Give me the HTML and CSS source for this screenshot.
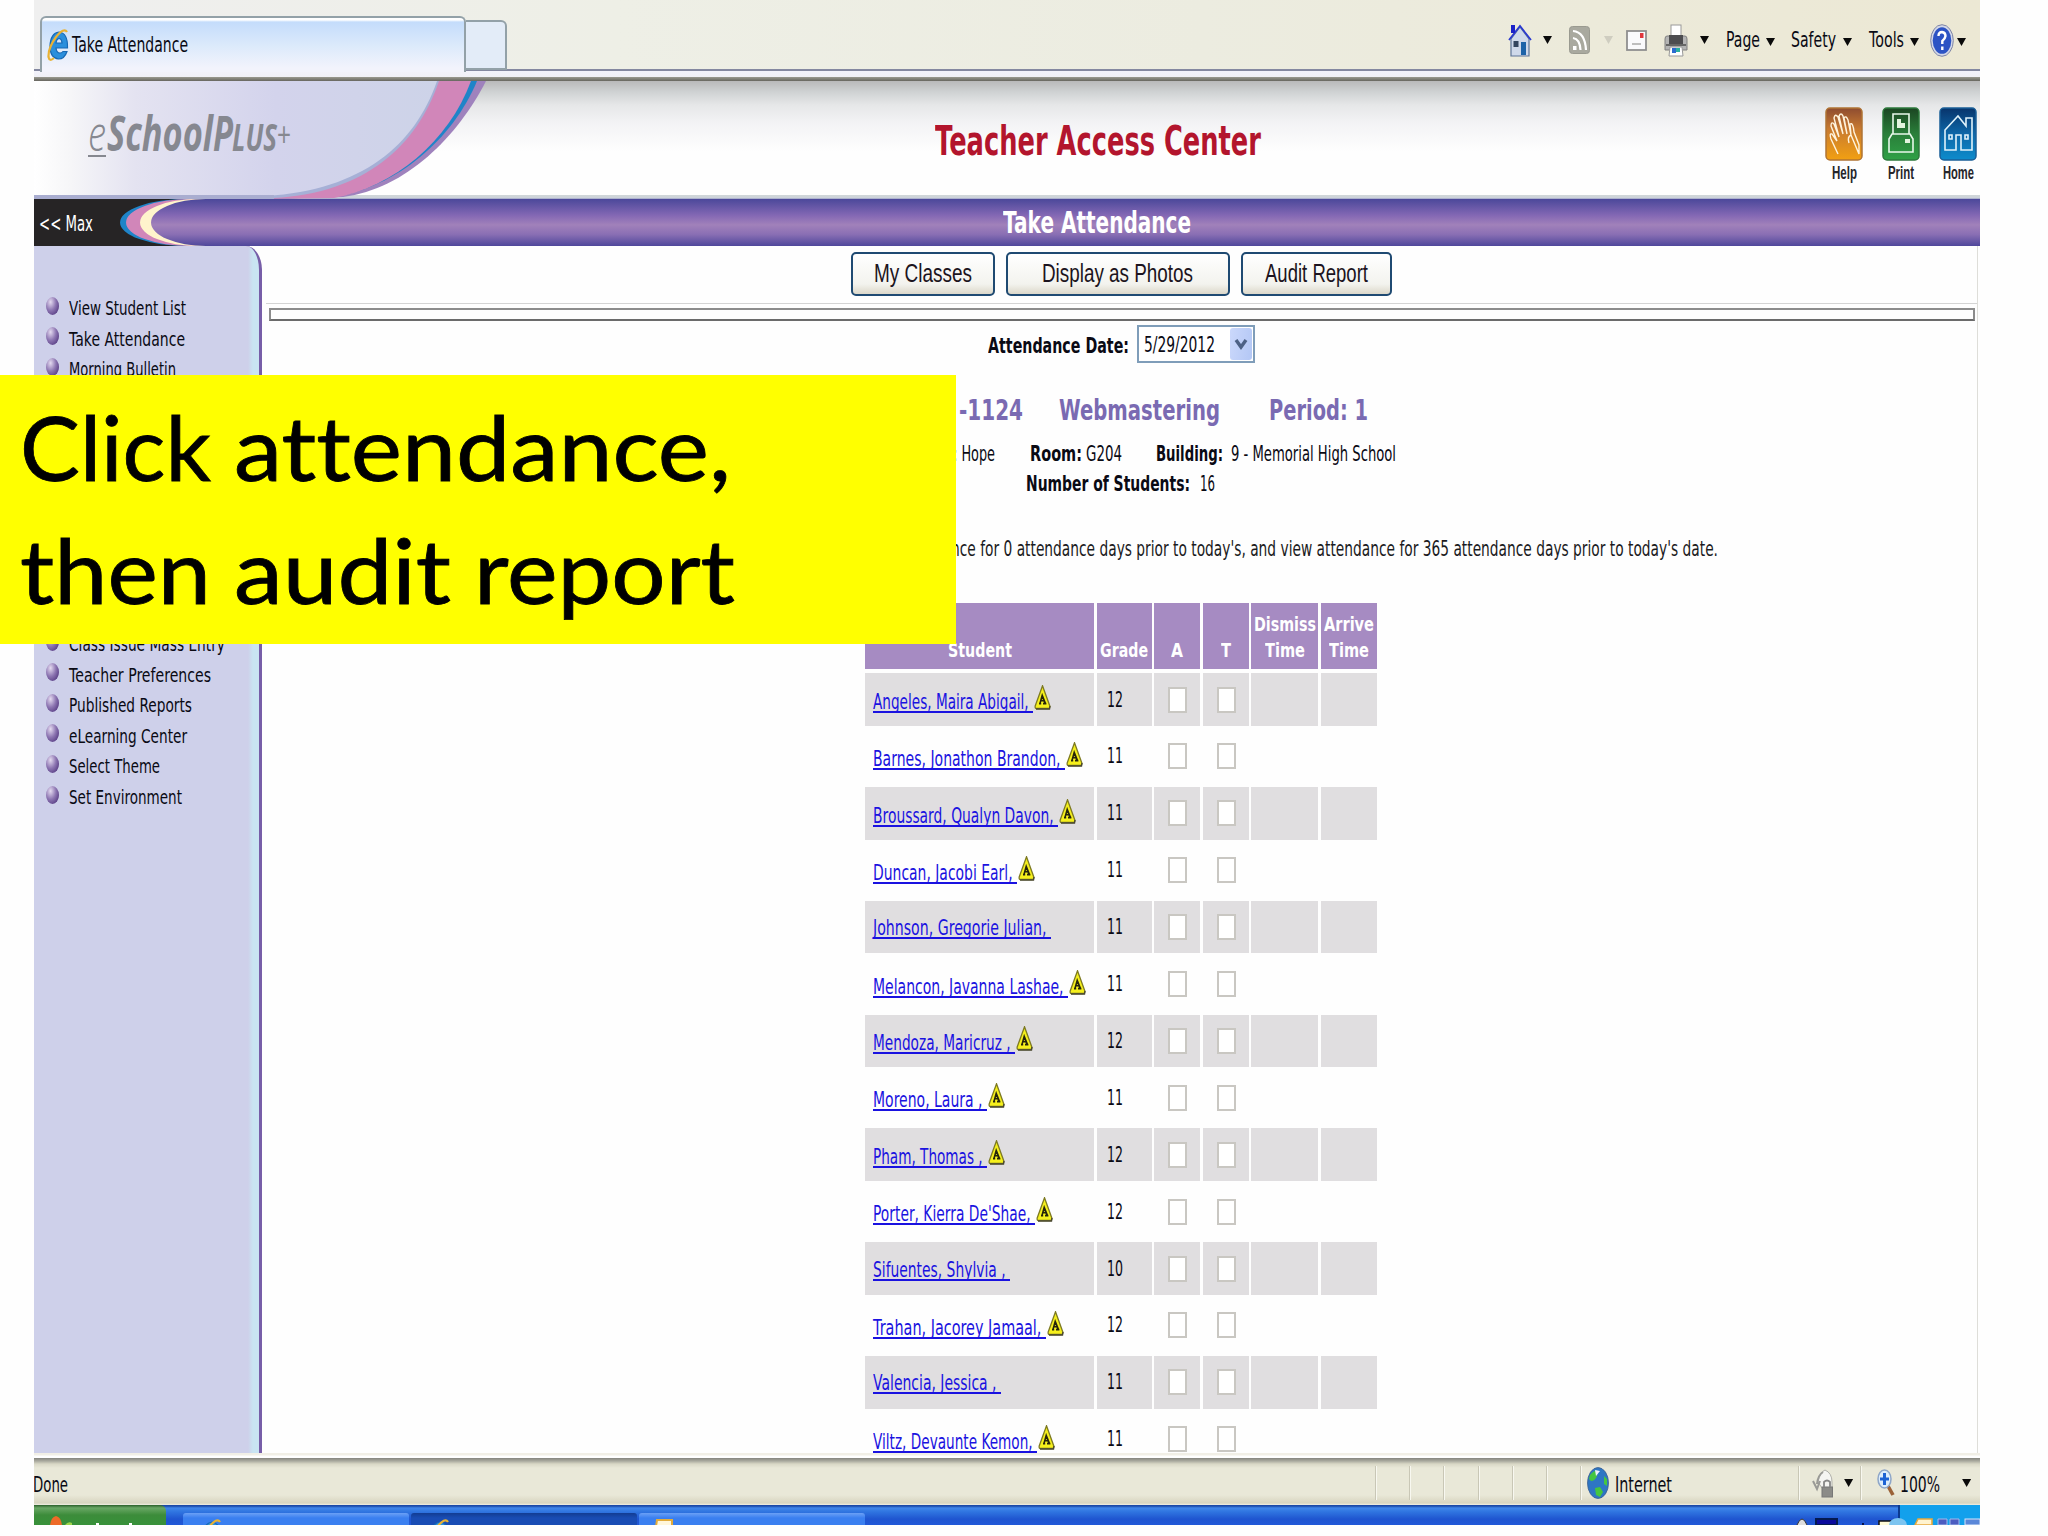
FILE: index.html
```html
<!DOCTYPE html>
<html lang="en">
<head>
<meta charset="utf-8">
<title>Take Attendance</title>
<link rel="stylesheet" href="styles.css">
</head>
<body>
<svg class="defs" width="0" height="0" aria-hidden="true">
  <defs>
    <symbol id="warn" viewBox="0 0 17 25">
      <path d="M8.500 .8 L15.800 21 Q16 23.500 14 23.500 H2.500 Q.8 23.500 1.200 21 Z" fill="#f6f01c" stroke="#7d7a22" stroke-width="1.300"/>
      <path d="M2 24 H15.500 L16 21" fill="none" stroke="#4a4830" stroke-width="1.400"/>
      <path d="M5 18.600 H7.200 M9 18.600 H12.400 M6 18.400 L8.200 10.500 L11 18.400 M8.500 11 L11.300 18 M7 15.800 H9.600" fill="none" stroke="#26240a" stroke-width="1.600"/>
    </symbol>
    <symbol id="ie" viewBox="0 0 22 34">
      <path d="M19 20 H9 Q9.500 25 13 25 Q15 25 16 23.500 H20 Q17.500 31 11.500 31 Q3 30 3 18 Q3.500 5 12 4 Q21 5 20.500 20 Z M9 15 H15 Q14.500 10.500 12 10.500 Q9.500 11 9 15 Z" fill="#2a8fdc" fill-rule="evenodd" stroke="#1668b4" stroke-width="1.200"/>
      <path d="M20 4 Q17 -1 9 9 Q1 20 1.500 29 Q2.500 34 7 30" fill="none" stroke="#e9b233" stroke-width="2.200"/>
    </symbol>
  </defs>
</svg>

<div class="window">
  <div class="tabbar">
    <div class="tab">
      <svg width="22" height="34"><use href="#ie"/></svg>
      <span class="fit" data-w="116">Take Attendance</span>
    </div>
    <div class="newtab"></div>
    <div class="tools">
      <svg class="t-home" width="24" height="33" viewBox="0 0 24 33">
        <path d="M3 15 V32 H21 V15 L12 3 Z" fill="#cfd9ea" stroke="#5e7598" stroke-width="1.200"/>
        <path d="M1 16 L12 2 L23 16" fill="none" stroke="#2a39d0" stroke-width="1.800"/>
        <rect x="3" y="1" width="4" height="8" fill="#1c22c8"/>
        <rect x="5.500" y="17" width="5" height="6" fill="#34465f"/><rect x="13" y="18" width="5" height="13" fill="#1d63a8"/>
      </svg>
      <i class="arr a1"></i>
      <svg class="t-rss" width="21" height="28" viewBox="0 0 21 28">
        <rect x=".5" y=".5" width="20" height="27" rx="3" fill="#a9a99f" stroke="#9a9a90"/>
        <rect x="4" y="20" width="3.500" height="4" fill="#fff"/>
        <path d="M4 12 Q11 13 11.500 24 M4 5 Q16 6 17 24" fill="none" stroke="#fff" stroke-width="2.200"/>
      </svg>
      <i class="arr a2"></i>
      <svg class="t-mail" width="21" height="21" viewBox="0 0 21 21">
        <rect x="1" y="1" width="19" height="19" fill="#fafafc" stroke="#8f8f8f" stroke-width="1.800"/>
        <rect x="14" y="3" width="3.500" height="5" fill="#e0363c"/><path d="M6 14 H15" stroke="#aaa" stroke-width="1.500"/>
      </svg>
      <svg class="t-print" width="24" height="33" viewBox="0 0 24 33">
        <rect x="7" y="1" width="10" height="12" fill="#fff" stroke="#999"/>
        <path d="M1 15 Q1 12 3 12 H21 Q23 12 23 15 V26 H1 Z" fill="#b4b4b4" stroke="#808080"/>
        <rect x="5" y="11" width="14" height="9" fill="#4d4d50"/><path d="M2 21 H22" stroke="#666" stroke-width="2"/>
        <path d="M6 23 H18 L19 32 H5 Z" fill="#fff" stroke="#999"/><rect x="8" y="24" width="4" height="5" fill="#2b6bd0"/><rect x="12" y="24" width="4" height="4" fill="#2bb0a0"/>
      </svg>
      <i class="arr a3"></i>
      <span class="fit" data-w="34">Page</span><i class="arr a4"></i>
      <span class="fit" data-w="45">Safety</span><i class="arr a5"></i>
      <span class="fit" data-w="35">Tools</span><i class="arr a6"></i>
      <svg class="t-help" width="24" height="33" viewBox="0 0 24 33">
        <ellipse cx="12" cy="16.500" rx="11.300" ry="15.800" fill="#d4d8e8" stroke="#7d84a4"/>
        <ellipse cx="12" cy="16.500" rx="9.300" ry="13.300" fill="#2c53c4"/>
        <path d="M8.500 12 Q8.500 8 12 8 Q15.500 8.500 15.500 12 Q15 15 12.300 17 V20 M12.300 22.500 V26" fill="none" stroke="#fff" stroke-width="2.400"/>
      </svg>
      <i class="arr a7"></i>
    </div>
  </div>

  <div class="header">
    <svg class="swoosh" width="452" height="118" viewBox="0 0 452 118">
      <defs><linearGradient id="lg"><stop offset="0" stop-color="#fff"/><stop offset=".09" stop-color="#f6f6f8"/><stop offset=".25" stop-color="#e4e3f1"/><stop offset=".6" stop-color="#d3d3ec"/><stop offset="1" stop-color="#cdd3e8"/></linearGradient></defs>
      <path d="M452 0 C424 55 372 108 309 116 L230 118 L404 0 Z" fill="#9f82bd"/>
      <path d="M443 0 C419 58 363 106 300 116 L230 118 L404 0 Z" fill="#1f84c8"/>
      <path d="M437 0 C415 60 360 106 300 117 L230 118 L400 0 Z" fill="#d186b9"/>
      <path d="M0 0 H405 C383 65 331 112 240 117 H0 Z" fill="#a6b0d6"/>
      <path d="M0 0 H403 C381 64 328 109 232 115 H0 Z" fill="url(#lg)"/>
      <path d="M0 114 H240 V118 H0 Z" fill="#a9add0"/>
    </svg>
    <div class="logo">
      <span class="logo-e"><span class="fit" data-w="18">e</span></span>
      <span class="logo-b fit" data-w="106">School</span>
      <span class="logo-b fit" data-w="20">P</span>
      <span class="logo-s fit" data-w="45">LUS</span>
      <span class="logo-p fit" data-w="14">+</span>
    </div>
    <div class="apptitle"><span class="fit" data-w="326">Teacher Access Center</span></div>
    <div class="actions">
      <div class="action">
        <svg width="38" height="54" viewBox="0 0 38 54">
          <defs><linearGradient id="g1" x2="0" y2="1"><stop offset="0" stop-color="#8e4c30"/><stop offset=".4" stop-color="#c87a30"/><stop offset="1" stop-color="#f2a012"/></linearGradient></defs>
          <rect x="1" y="1" width="36" height="52" rx="4" fill="url(#g1)" stroke="#b07434" stroke-width="1.500"/>
          <path d="M13 47 L6 32 Q4 26 7 27 L12 34 L6 19 Q6 14 9 17 L14 30 L9 11 Q10 6 13 10 L18 27 L14 9 Q16 5 18 9 L22 27 L19 11 Q21 8 23 13 L26 28 Q22 30 24 36 M26 28 L25 17 Q28 15 29 25 L34 38 L34 47 Z" fill="none" stroke="#fff3dc" stroke-width="1.400"/>
        </svg>
        <span class="fit" data-w="25">Help</span>
      </div>
      <div class="action">
        <svg width="38" height="54" viewBox="0 0 38 54">
          <defs><linearGradient id="g2" x2="0" y2="1"><stop offset="0" stop-color="#1b4522"/><stop offset=".5" stop-color="#2a7f3a"/><stop offset="1" stop-color="#2fa146"/></linearGradient></defs>
          <rect x="1" y="1" width="36" height="52" rx="4" fill="url(#g2)" stroke="#2d7a3c" stroke-width="1.500"/>
          <path d="M11 27 V7 H27 V27 M7 45 V32 L10 27 H28 L31 32 V45 Z" fill="none" stroke="#e8f8ea" stroke-width="1.600"/>
          <path d="M15 12 H19 V16 H23 V21 H15 Z M23 32 H28 V36 H23 Z" fill="#e3f4df"/>
        </svg>
        <span class="fit" data-w="26">Print</span>
      </div>
      <div class="action">
        <svg width="38" height="54" viewBox="0 0 38 54">
          <defs><linearGradient id="g3" x2="0" y2="1"><stop offset="0" stop-color="#08346c"/><stop offset=".5" stop-color="#0d67a8"/><stop offset="1" stop-color="#0d8ccc"/></linearGradient></defs>
          <rect x="1" y="1" width="36" height="52" rx="4" fill="url(#g3)" stroke="#1a5f98" stroke-width="1.500"/>
          <path d="M6 43 V23 L19 9 L27 19 V11 H33 V43 H22 V28 H17 V43 Z M10 28 H13 V32 H10 Z M26 28 H29 V32 H26 Z" fill="none" stroke="#dff2fb" stroke-width="1.600"/>
        </svg>
        <span class="fit" data-w="31">Home</span>
      </div>
    </div>
  </div>

  <div class="titlebar">
    <svg class="crescent" width="180" height="47" viewBox="0 0 180 47" preserveAspectRatio="none">
      <defs><linearGradient id="pb" x2="0" y2="1"><stop offset="0" stop-color="#4b489a"/><stop offset=".35" stop-color="#8468b4"/><stop offset=".55" stop-color="#a181ba"/><stop offset=".75" stop-color="#8a6fb4"/><stop offset="1" stop-color="#4f479b"/></linearGradient></defs>
      <rect width="180" height="47" fill="#262425"/>
      <path d="M180 0 H152 A66 23.500 0 0 0 152 47 H180 Z" fill="#1f84c8"/>
      <path d="M180 0 H156 A64 23.500 0 0 0 156 47 H180 Z" fill="#d186b9"/>
      <path d="M180 0 H164 A58 23.500 0 0 0 164 47 H180 Z" fill="#fff4cc"/>
      <path d="M180 0 H172 A55 23.500 0 0 0 172 47 H180 Z" fill="url(#pb)"/>
    </svg>
    <span class="max fit" data-w="54">&lt;&lt; Max</span>
    <span class="ptitle fit" data-w="188">Take Attendance</span>
  </div>

  <div class="body">
    <div class="sidebar">
      <ul class="nav">
        <li><i></i><span class="fit" data-w="117">View Student List</span></li>
        <li><i></i><span class="fit" data-w="116">Take Attendance</span></li>
        <li><i></i><span class="fit" data-w="107">Morning Bulletin</span></li>
      </ul>
      <ul class="nav nav-lower">
        <li><i></i><span class="fit" data-w="156">Class Issue Mass Entry</span></li>
        <li><i></i><span class="fit" data-w="142">Teacher Preferences</span></li>
        <li><i></i><span class="fit" data-w="123">Published Reports</span></li>
        <li><i></i><span class="fit" data-w="118">eLearning Center</span></li>
        <li><i></i><span class="fit" data-w="91">Select Theme</span></li>
        <li><i></i><span class="fit" data-w="113">Set Environment</span></li>
      </ul>
    </div>
    <div class="main">
      <div class="buttons">
        <button class="b1"><span class="fit" data-w="98">My Classes</span></button>
        <button class="b2"><span class="fit" data-w="151">Display as Photos</span></button>
        <button class="b3"><span class="fit" data-w="103">Audit Report</span></button>
      </div>
      <div class="rule"></div>
      <div class="date">
        <b class="fit" data-w="141">Attendance Date:</b>
        <div class="select"><span class="fit" data-w="71">5/29/2012</span>
          <div class="drop"><svg width="14" height="12" viewBox="0 0 14 12"><path d="M2 2 L7 9 L12 2" fill="none" stroke="#4d6185" stroke-width="3.400"/></svg></div>
        </div>
      </div>
      <div class="course">
        <span class="fit" data-w="64">-1124</span>
        <span class="fit" data-w="161">Webmastering</span>
        <span class="fit" data-w="99">Period: 1</span>
      </div>
      <div class="info">
        <span class="fit" data-w="42">: Hope</span>
        <b class="fit room" data-w="52">Room:</b><span class="fit room-no" data-w="36">G204</span>
        <b class="fit bldg" data-w="67">Building:</b><span class="fit bldg-name" data-w="165">9 - Memorial High School</span>
      </div>
      <div class="count"><b class="fit" data-w="164">Number of Students:</b><span class="fit" data-w="15">16</span></div>
      <div class="note"><span class="fit" data-w="767">nce for 0 attendance days prior to today's, and view attendance for 365 attendance days prior to today's date.</span></div>

      <div class="grid">
        <div class="row head">
          <div><span class="fit" data-w="64">Student</span></div>
          <div><span class="fit" data-w="48">Grade</span></div>
          <div><span class="fit" data-w="12">A</span></div>
          <div><span class="fit" data-w="10">T</span></div>
          <div><span class="fit" data-w="62">Dismiss</span><span class="fit" data-w="40">Time</span></div>
          <div><span class="fit" data-w="50">Arrive</span><span class="fit" data-w="40">Time</span></div>
        </div>
        <div class="row"><div><a class="fit" data-w="160">Angeles, Maira Abigail,&nbsp;</a><svg><use href="#warn"/></svg></div><div><span class="fit" data-w="16">12</span></div><div><i></i></div><div><i></i></div><div></div><div></div></div>
        <div class="row"><div><a class="fit" data-w="192">Barnes, Jonathon Brandon,&nbsp;</a><svg><use href="#warn"/></svg></div><div><span class="fit" data-w="16">11</span></div><div><i></i></div><div><i></i></div><div></div><div></div></div>
        <div class="row"><div><a class="fit" data-w="185">Broussard, Qualyn Davon,&nbsp;</a><svg><use href="#warn"/></svg></div><div><span class="fit" data-w="16">11</span></div><div><i></i></div><div><i></i></div><div></div><div></div></div>
        <div class="row"><div><a class="fit" data-w="144">Duncan, Jacobi Earl,&nbsp;</a><svg><use href="#warn"/></svg></div><div><span class="fit" data-w="16">11</span></div><div><i></i></div><div><i></i></div><div></div><div></div></div>
        <div class="row plain"><div><a class="fit" data-w="178">Johnson, Gregorie Julian,&nbsp;</a></div><div><span class="fit" data-w="16">11</span></div><div><i></i></div><div><i></i></div><div></div><div></div></div>
        <div class="row"><div><a class="fit" data-w="195">Melancon, Javanna Lashae,&nbsp;</a><svg><use href="#warn"/></svg></div><div><span class="fit" data-w="16">11</span></div><div><i></i></div><div><i></i></div><div></div><div></div></div>
        <div class="row"><div><a class="fit" data-w="142">Mendoza, Maricruz ,&nbsp;</a><svg><use href="#warn"/></svg></div><div><span class="fit" data-w="16">12</span></div><div><i></i></div><div><i></i></div><div></div><div></div></div>
        <div class="row"><div><a class="fit" data-w="114">Moreno, Laura ,&nbsp;</a><svg><use href="#warn"/></svg></div><div><span class="fit" data-w="16">11</span></div><div><i></i></div><div><i></i></div><div></div><div></div></div>
        <div class="row"><div><a class="fit" data-w="114">Pham, Thomas ,&nbsp;</a><svg><use href="#warn"/></svg></div><div><span class="fit" data-w="16">12</span></div><div><i></i></div><div><i></i></div><div></div><div></div></div>
        <div class="row"><div><a class="fit" data-w="162">Porter, Kierra De'Shae,&nbsp;</a><svg><use href="#warn"/></svg></div><div><span class="fit" data-w="16">12</span></div><div><i></i></div><div><i></i></div><div></div><div></div></div>
        <div class="row plain"><div><a class="fit" data-w="137">Sifuentes, Shylvia ,&nbsp;</a></div><div><span class="fit" data-w="16">10</span></div><div><i></i></div><div><i></i></div><div></div><div></div></div>
        <div class="row"><div><a class="fit" data-w="173">Trahan, Jacorey Jamaal,&nbsp;</a><svg><use href="#warn"/></svg></div><div><span class="fit" data-w="16">12</span></div><div><i></i></div><div><i></i></div><div></div><div></div></div>
        <div class="row plain"><div><a class="fit" data-w="128">Valencia, Jessica ,&nbsp;</a></div><div><span class="fit" data-w="16">11</span></div><div><i></i></div><div><i></i></div><div></div><div></div></div>
        <div class="row"><div><a class="fit" data-w="164">Viltz, Devaunte Kemon,&nbsp;</a><svg><use href="#warn"/></svg></div><div><span class="fit" data-w="16">11</span></div><div><i></i></div><div><i></i></div><div></div><div></div></div>
      </div>
    </div>
  </div>

  <div class="status">
    <div class="done"><span class="fit" data-w="35">Done</span></div>
    <div class="seg"></div><div class="seg"></div><div class="seg"></div><div class="seg"></div><div class="seg"></div><div class="seg"></div>
    <div class="zone">
      <svg width="22" height="32" viewBox="0 0 22 32">
        <ellipse cx="11" cy="16" rx="10.500" ry="15.500" fill="#2e76c4" stroke="#3c5f90" stroke-width=".8"/>
        <path d="M3 8 Q8 2 11 4 L10 9 Q8 14 4 14 L2 12 Z M8 21 L13 20 L16 25 L13 30 L9 28 Z M17 9 L20 12 L20 19 L17 17 Z" fill="#45c640"/>
        <path d="M8 3 L13 4 L9 9 Z" fill="#eef"/>
      </svg>
      <span class="fit" data-w="57">Internet</span>
    </div>
    <div class="lock">
      <svg width="22" height="30" viewBox="0 0 22 30">
        <path d="M6 14 Q8 4 13 2 Q20 5 20 14 V20 H10 Z" fill="#f5f5f2" stroke="#b0b0aa"/>
        <path d="M1 13 L5 21 L8 13 M5 16 Q6 7 11 4" fill="none" stroke="#9a9a96" stroke-width="2"/>
        <rect x="10" y="19" width="10.500" height="10" fill="#8b8b88" stroke="#777"/><path d="M12 19 V14 Q15 11 18 14 V19" fill="none" stroke="#888" stroke-width="1.800"/>
      </svg>
      <i class="arr"></i>
    </div>
    <div class="zoom">
      <svg width="18" height="28" viewBox="0 0 18 28">
        <path d="M11 17 L16 26" stroke="#9b6238" stroke-width="3.600"/>
        <ellipse cx="7.500" cy="10" rx="6.500" ry="9" fill="#dcecfb" stroke="#8ea6c8" stroke-width="1.500"/>
        <path d="M7.500 4 V16 M3 10 H12" stroke="#1c62d4" stroke-width="3"/>
      </svg>
      <span class="fit" data-w="40">100%</span>
      <i class="arr"></i>
    </div>
  </div>

  <div class="taskbar">
    <div class="start">
      <svg width="110" height="20" viewBox="0 0 110 20">
        <path d="M16 20 Q17 12 22 11 Q27 12 28 20 Z" fill="#ee6a28"/><path d="M31 20 Q34 16 38 18 V20 Z" fill="#9fd44a"/>
        <rect x="62" y="18" width="3" height="2" fill="#fff"/><rect x="95" y="18" width="3" height="2" fill="#fff"/>
      </svg>
    </div>
    <div class="task"><svg width="22" height="34"><use href="#ie"/></svg></div>
    <div class="task on"><svg width="22" height="34"><use href="#ie"/></svg></div>
    <div class="task doc"><svg width="22" height="20" viewBox="0 0 22 20"><path d="M3 20 L5 7 H20 V20 Z" fill="#fff6dc" stroke="#e2ac3c" stroke-width="2"/></svg></div>
    <div class="tray-icons">
      <svg width="120" height="20" viewBox="0 0 120 20">
        <path d="M17 20 Q22 8 27 20" fill="#ddd" stroke="#333"/><rect x="36" y="14" width="21" height="6" fill="#0a0a9c" stroke="#041a50" stroke-width="2"/>
        <rect x="82" y="18" width="2" height="2" fill="#06124a"/><path d="M99 20 V16 H116 V20" fill="#fffbd8" stroke="#111" stroke-width="1.500"/>
      </svg>
    </div>
    <div class="tray">
      <svg width="91" height="20" viewBox="0 0 91 20">
        <ellipse cx="9" cy="20" rx="9" ry="7" fill="#7cc4f0"/><path d="M26 20 L29 14 H43 V20 Z" fill="#fff3d0" stroke="#e6a83c" stroke-width="1.600"/>
        <path d="M49 14 H58 V20 H49 Z M61 14 H70 V20 H61 Z" fill="#4c5cc0" stroke="#a5b8ea"/><rect x="76" y="14" width="15" height="6" fill="#5a87d8" stroke="#d8e4f8"/>
      </svg>
    </div>
  </div>
</div>

<div class="callout">
  <div><span class="fit" data-w="191">Click</span><span class="fit w1" data-w="497">attendance,</span></div>
  <div><span class="fit" data-w="191">then</span><span class="fit w1" data-w="217">audit</span><span class="fit w2" data-w="261">report</span></div>
</div>
<script src="fit.js"></script>
</body>
</html>
```
FILE: styles.css
```css
* { box-sizing: border-box; }
body { margin: 0; width: 2048px; height: 1536px; overflow: hidden; background: #fefefe; position: relative;
  font-family: "DejaVu Sans", "Noto Sans", sans-serif; font-size: 20.500px; color: #0a0a14; }
.defs { position: absolute; }
svg { display: block; flex: none; }
.fit { display: inline-block; white-space: nowrap; transform-origin: 0 50%; flex: none; }
.window { margin-left: 34px; width: 1946px; height: 1525px; display: flex; flex-direction: column; overflow: hidden; }

/* browser tab strip and command bar */
.tabbar { height: 81px; flex: none; display: flex; align-items: flex-start; padding-left: 6px;
  background: linear-gradient(#5550 69px, #8488a0 69px, #8488a0 71px, #f2f2fb 71px, #f0f0f6 77px, #9a9a90 77px, #67665f 81px),
    linear-gradient(90deg, #efefef, #eeefe6 30%, #ecece0 60%, #ece8d4); }
.tab { margin-top: 16px; width: 426px; height: 56px; border: 2px solid #93a1a8; border-bottom: 0; border-radius: 6px 6px 0 0;
  background: linear-gradient(#fff 2px, #c4dcfb 4px, #dceafb 28px, #f2f3fc 50px); display: flex; align-items: center; gap: 3px; padding: 0 0 1px 5px; }
.newtab { margin-top: 20px; width: 41px; height: 50px; border: 2px solid #93a1a8; border-left: 0; border-radius: 0 6px 0 0; background: #e3ecf8; }
.tools { margin-left: 1001px; height: 80px; display: flex; align-items: center; white-space: nowrap; }
.arr { width: 9px; height: 8px; background: #0a0a0a; clip-path: polygon(0 0, 100% 0, 50% 100%); flex: none; }
.a1 { margin: 0 17px 0 11px; } .a2 { margin: 0 13px 0 14px; background: #cfcdc0; } .t-print { margin-left: 17px; }
.a3 { margin: 0 17px 0 12px; } .a4 { margin: 4px 16px 0 6px; } .a5 { margin: 4px 17px 0 7px; } .a6 { margin: 4px 11px 0 6px; } .a7 { margin: 4px 0 0 3px; }

/* application header */
.header { height: 118px; flex: none; position: relative; display: flex;
  background: linear-gradient(#b9b9ba, #cfd2d3 11px, #e6e7e8 24px, #f3f3f5 42px, #fefefe 70px, #fefefe 114px, #d0d6d9 114px, #cdd3da 117px, #8c90c0 118px); }
.swoosh { position: absolute; left: 0; top: 0; }
.logo { position: relative; width: 452px; height: 114px; padding: 5px 0 0 54px; display: flex; align-items: baseline; font: italic bold 49px/92px "Open Sans", sans-serif; color: #868890; }
.logo-e { font-weight: 300; margin-right: 1px; display: inline-flex; height: 71px; border-bottom: 2px solid #868890; }
.logo-s { font-size: 38px; margin-left: -1px; }
.logo-p { font-size: 34px; font-weight: 400; font-style: normal; position: relative; top: -4px; }
.apptitle { margin-left: 449px; font-weight: bold; font-size: 41px; line-height: 121px; height: 114px; color: #b3152d; width: 326px; }
.actions { margin-left: 564px; padding-top: 26px; display: flex; gap: 19px; }
.action { width: 38px; display: flex; flex-direction: column; align-items: center; font: bold 18px/25px "Liberation Sans", sans-serif; color: #26262b; }

.titlebar { height: 47px; flex: none; position: relative; display: flex; align-items: center; color: #fff;
  background: linear-gradient(#4b489a, #8468b4 35%, #a181ba 55%, #8a6fb4 75%, #4f479b); }
.crescent { position: absolute; left: 0; top: 0; }
.max { margin-left: 5px; padding-top: 3px; position: relative; }
.ptitle { margin-left: 910px; font-weight: bold; font-size: 29.500px; }

/* page body */
.body { height: 1207px; flex: none; display: flex; overflow: hidden; }
.sidebar { width: 228px; height: 1207px; flex: none; border-right: 3px solid #775ea8; border-top-right-radius: 16px 24px; padding-top: 47.500px;
  background: linear-gradient(90deg, #ced0ea 214px, #c9e4f2 219px); }
.nav { list-style: none; margin: 0; padding: 0 0 0 12px; }
.nav li { height: 30.550px; display: flex; align-items: center; gap: 10px; font-size: 19.500px; }
.nav i { width: 13px; height: 18px; margin-top: -6px; border-radius: 50%; background: radial-gradient(ellipse at 35% 28%, #e4daf0, #8d76b2 45%, #5a3f86 80%, #8d86a4); }
.nav-lower { margin-top: 244.400px; }
.main { width: 1718px; background: linear-gradient(90deg, #0000 1715px, #deded9 1715px, #deded9 1716px, #0000 1716px); }
.buttons { height: 57px; padding: 6px 0 0 589px; display: flex; gap: 11px; }
button { height: 44px; border: 2px solid #1f4a72; border-radius: 5px; padding: 0 0 2px; background: linear-gradient(#fff, #f3f3ee 75%, #dcd8ca); color: #1c1420;
  font: 26px/36px "Liberation Sans", sans-serif; display: flex; justify-content: center; align-items: center; }
.b1 { width: 144px; } .b2 { width: 224px; padding-right: 2px; } .b3 { width: 151px; }
.rule { margin: 0 3px 0 4px; height: 14px; border-top: 1px solid #d4d4d4; padding: 4px 2px 0 3px; }
.rule::after { content: ""; display: block; height: 9px; border: 2px solid #8c8c8c; border-bottom-color: #6b6b6b; }
.date { height: 52px; padding: 8px 0 0 726px; display: flex; gap: 8px; font-size: 21px; }
.date > b { line-height: 43px; }
.select { width: 118px; height: 38px; border: 2px solid #7f9db9; background: #fff; display: flex; align-items: center; justify-content: space-between; padding: 0 1px 0 5px; font-size: 20.500px; line-height: 36px; }
.select .fit { padding-top: 2px; }
.drop { width: 22px; height: 32px; border-radius: 3px; background: linear-gradient(100deg, #cbd8fb, #b3c7f5); display: flex; align-items: center; justify-content: center; }
.course { height: 71px; padding: 16px 0 0 697px; display: flex; font-weight: bold; font-size: 29px; line-height: 50px; color: #7a6ab2; }
.course span:nth-child(2) { margin-left: 36px; } .course span:nth-child(3) { margin-left: 49px; }
.info { height: 29px; line-height: 28px; padding-left: 691px; display: flex; }
.room { margin-left: 35px; } .room-no { margin-left: 4px; } .bldg { margin-left: 34px; } .bldg-name { margin-left: 8px; }
.count { height: 30px; line-height: 31px; padding-left: 764px; display: flex; gap: 10px; }
.note { height: 104px; padding: 35px 0 0 689px; line-height: 30px; color: #1b1b22; }
.grid { margin: 0 0 0 603px; display: flex; flex-direction: column; gap: 4.300px; }
.row { display: grid; grid-template-columns: 229px 55px 46px 46px 67px 56px; column-gap: 2.600px; height: 52.600px; flex: none; }
.row > div { display: flex; align-items: center; justify-content: center; }
.row:nth-child(even) > div { background: #e0dee0; }
.row > div:nth-child(1) { justify-content: flex-start; padding-left: 8px; }
.row > div:nth-child(2) { justify-content: flex-start; padding: 0 0 0 10px; }
.row a { color: #1a12e0; text-decoration: underline 2px; text-underline-offset: 2px; text-decoration-skip-ink: none; padding-top: 5px; }
.plain a { padding-top: 2px; }
.row svg { width: 17px; height: 25px; margin: -4px 0 0 1px; }
.row i { width: 19px; height: 26px; border: 2px solid #c9c7c2; background: #fff; }
.row > div:nth-child(4) i { margin-left: 1px; }
.row.head { height: 66px; color: #fff; font-weight: bold; font-size: 20px; line-height: 26px; }
.row.head > div { background: #a68bc2; flex-direction: column; justify-content: flex-end; align-items: center; padding: 0 0 6px; }

/* status bar */
.status { height: 52px; flex: none; display: flex; padding-top: 13px;
  background: linear-gradient(#f1efe6 2px, #fff 3px, #fff 5px, #85857e 5px, #a9a99e 8px, #d9d8c6 11px, #e9e8d8 15px, #e9e8d8 42px, #d8d5c0 50px, #f0efe4 52px); }
.status > div { height: 34px; border-right: 1px solid #c9c7b6; box-shadow: 1px 0 #f8f8f0; flex: none; display: flex; align-items: center; }
.status .fit { padding-top: 4px; }
.status > .done { width: 1343px; margin-left: -1px; }
.status > .seg { width: 34.200px; }
.status > .zone { width: 218px; padding-left: 6px; gap: 6px; }
.status > .lock { width: 62px; padding-left: 13px; gap: 10px; }
.status > .zoom { width: 118px; border: 0; box-shadow: none; padding-left: 16px; gap: 5px; }
.zoom .arr { margin-left: 17px; }

/* taskbar */
.taskbar { height: 20px; flex: none; display: flex; overflow: hidden; background: linear-gradient(#1b49a8 1px, #3f86ea 3px, #2f74e0 7px, #1f55d0 14px, #2058d8); }
.start { width: 132px; flex: none; background: linear-gradient(#2a5f2a, #6aa765 3px, #3c8c3a 10px, #37913a); border-radius: 0 6px 0 0; margin-right: 17px; }
.task { width: 226px; flex: none; margin: 8px 2px 0 0; height: 20px; border-radius: 3px 3px 0 0; background: linear-gradient(#6ba0f6, #3a7ff0 5px); padding: 5px 0 0 17px; overflow: hidden; }
.task.doc { padding: 0 0 0 13px; }
.task.on { background: linear-gradient(#123c92, #194cb4 5px); }
.tray-icons { margin-left: auto; width: 109px; flex: none; }
.tray { position: relative; width: 91px; flex: none; background: linear-gradient(90deg, #0000 9px, #0b3a90 9px, #0b3a90 11px, #0000 11px), linear-gradient(90deg, #0000 10px, #12a0ec 10px); }

/* slide callout */
.callout { position: absolute; left: 0; top: 375px; width: 956px; height: 269px; background: #ffff00; color: #000; padding: 10px 0 0 20px;
  font: 89px/123px Lato, "Open Sans", sans-serif; font-variant-ligatures: none; -webkit-text-stroke: .8px #000; }
.callout div { height: 123px; display: flex; }
.w1 { margin-left: 23px; }
.w2 { margin-left: 23px; }
```
FILE: fit.js
```js
// Condense each label horizontally to its column width, keeping its height.
document.querySelectorAll('.fit').forEach(function (el) {
  var target = parseFloat(el.dataset.w);
  var natural = el.getBoundingClientRect().width;
  el.style.transform = 'scaleX(' + target / natural + ')';
  el.style.marginRight = (parseFloat(getComputedStyle(el).marginRight) || 0) + target - natural + 'px';
});
```
